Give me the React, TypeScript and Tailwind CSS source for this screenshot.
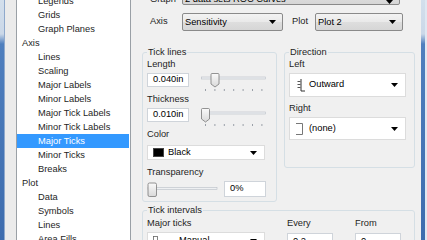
import React from "react";

const treeItems: { label: string; parent?: boolean; selected?: boolean }[] = [
  { label: "Legends" },
  { label: "Grids" },
  { label: "Graph Planes" },
  { label: "Axis", parent: true },
  { label: "Lines" },
  { label: "Scaling" },
  { label: "Major Labels" },
  { label: "Minor Labels" },
  { label: "Major Tick Labels" },
  { label: "Minor Tick Labels" },
  { label: "Major Ticks", selected: true },
  { label: "Minor Ticks" },
  { label: "Breaks" },
  { label: "Plot", parent: true },
  { label: "Data" },
  { label: "Symbols" },
  { label: "Lines" },
  { label: "Area Fills" },
];

const Arrow = () => (
  <svg width="7" height="4" viewBox="0 0 7 4" className="shrink-0">
    <path d="M0 0h7L3.5 4z" fill="#000" />
  </svg>
);

const GrayCombo = ({ text, width, align = "items-center" }: { text: string; width: string; align?: string }) => (
  <div
    className={`${width} h-[18px] flex ${align} justify-between pl-[2px] pr-[6px] rounded-[2px] border border-[#8a8a8a] bg-[linear-gradient(to_bottom,#f3f3f3,#e9e9e9_50%,#dedede_50%,#d6d6d6)] text-black`}
  >
    <span className="leading-[10px]">{text}</span>
    <Arrow />
  </div>
);

const WhiteCombo = ({
  width,
  height,
  icon,
  text,
}: {
  width: string;
  height: string;
  icon: React.ReactNode;
  text: string;
}) => (
  <div
    className={`${width} ${height} flex items-center bg-white border border-[#dcdcdc] pl-[5px] pr-[7px] text-black`}
  >
    {icon}
    <span className="ml-[4px] flex-1">{text}</span>
    <Arrow />
  </div>
);

const Thumb = ({ x }: { x: number }) => (
  <path
    d={`M${x + 1} 0.5h6a1 1 0 0 1 1 1v9.5l-4 3l-4 -3v-9.5a1 1 0 0 1 1 -1z`}
    fill="url(#thumbFill)"
    stroke="#7a7a7a"
    strokeWidth="0.8"
  />
);

const TickSlider = ({ thumb }: { thumb: number }) => (
  <svg width="66" height="20" viewBox="0 0 66 20" className="shrink-0">
    <defs>
      <linearGradient id="thumbFill" x1="0" y1="0" x2="0" y2="1">
        <stop offset="0" stopColor="#fafafa" />
        <stop offset="1" stopColor="#d9d9d9" />
      </linearGradient>
    </defs>
    <rect x="0.5" y="4" width="64" height="2" fill="#eef0f2" stroke="#b8bec6" strokeWidth="0.6" />
    {Array.from({ length: 7 }).map((_, i) => (
      <rect key={i} x={4 + i * 9.4} y="16" width="1" height="2" fill="#9aa0a8" />
    ))}
    <Thumb x={thumb} />
  </svg>
);

const TextBox = ({ value, width, height = "h-[14px]" }: { value: string; width: string; height?: string }) => (
  <div className={`${width} ${height} bg-white border border-[#cfd4da] flex items-center pl-[5px] text-black`}>
    {value}
  </div>
);

const Group = ({
  title,
  className,
  children,
}: {
  title: string;
  className: string;
  children: React.ReactNode;
}) => (
  <fieldset className={`border border-[#d5dfe5] rounded-[3px] px-[4px] ${className}`}>
    <legend className="px-[1px] leading-[12px] text-[#1e1e1e]">{title}</legend>
    {children}
  </fieldset>
);

const Label = ({ children, className = "" }: { children: React.ReactNode; className?: string }) => (
  <div className={`h-[12px] leading-[12px] text-[#1e1e1e] ${className}`}>{children}</div>
);

export default function App() {
  return (
    <div className="w-[427px] h-[240px] overflow-hidden flex bg-[#f0f0f0] font-['Liberation_Sans',Arial,sans-serif] text-[9.3px]">
      {/* left frame */}
      <div className="w-[5px] shrink-0 bg-[linear-gradient(to_bottom,#d3dfec_0px,#cbd8e8_34px,#4f7fbe_44px,#3d6cae_100%)] border-r border-[#8fa9cc]" />
      <div className="w-[11px] shrink-0 bg-[#ebebeb]" />

      {/* tree list */}
      <div className="w-[115px] shrink-0 bg-white border-l border-r border-[#9aa0a6] overflow-hidden">
        <div className="-mt-[6px]">
          {treeItems.map((item, i) => (
            <div
              key={i}
              className={`h-[14px] leading-[14px] whitespace-nowrap ${
                item.parent ? "pl-[5px]" : "pl-[21px]"
              } ${item.selected ? "bg-[#3399ff] text-white mr-[1px]" : "text-[#1e1e1e]"}`}
            >
              {item.label}
            </div>
          ))}
        </div>
      </div>

      {/* settings panel */}
      <div className="w-[290px] shrink-0 flex flex-col pl-[11px] pr-[6px]">
        <div className="-mt-[13px] h-[18px] flex items-end pl-[8px] shrink-0">
          <span className="w-[32px] leading-[10px] pb-[1px] text-[#1e1e1e]">Graph</span>
          <GrayCombo text="2 data sets ROC Curves" width="w-[218px]" align="items-end" />
        </div>
        <div className="mt-[8px] h-[18px] flex items-center pl-[8px] shrink-0">
          <span className="w-[32px] text-[#1e1e1e]">Axis</span>
          <GrayCombo text="Sensitivity" width="w-[101px]" />
          <span className="ml-[9px] w-[23px] text-[#1e1e1e]">Plot</span>
          <GrayCombo text="Plot 2" width="w-[88px]" />
        </div>

        <div className="mt-[15px] flex items-start gap-[7px] shrink-0">
          <Group title="Tick lines" className="w-[135px] pb-[4px]">
            <Label>Length</Label>
            <div className="mt-[3px] h-[20px] flex items-start">
              <TextBox value="0.040in" width="w-[42px]" />
              <div className="ml-[12px]">
                <TickSlider thumb={10} />
              </div>
            </div>
            <Label>Thickness</Label>
            <div className="mt-[3px] h-[20px] flex items-start">
              <TextBox value="0.010in" width="w-[42px]" />
              <div className="ml-[12px]">
                <TickSlider thumb={0.5} />
              </div>
            </div>
            <Label>Color</Label>
            <WhiteCombo
              width="w-[118px] mt-[5px]"
              height="h-[15px]"
              icon={<span className="w-[11px] h-[9px] bg-black border border-[#444] shrink-0" />}
              text="Black"
            />
            <Label className="mt-[6px]">Transparency</Label>
            <div className="mt-[3px] h-[16px] flex items-start">
              <svg width="71" height="16" viewBox="0 0 71 16" className="shrink-0">
                <defs>
                  <linearGradient id="thumbFill2" x1="0" y1="0" x2="0" y2="1">
                    <stop offset="0" stopColor="#fafafa" />
                    <stop offset="1" stopColor="#d9d9d9" />
                  </linearGradient>
                </defs>
                <rect x="1" y="6.5" width="69" height="2" fill="#eef0f2" stroke="#b8bec6" strokeWidth="0.6" />
                <rect x="1" y="2" width="8.5" height="13.5" rx="1.5" fill="url(#thumbFill2)" stroke="#7a7a7a" strokeWidth="0.8" />
              </svg>
              <div className="ml-[6px]">
                <TextBox value="0%" width="w-[42px]" height="h-[16px]" />
              </div>
            </div>
          </Group>

          <Group title="Direction" className="w-[131px] pb-[27px]">
            <Label>Left</Label>
            <WhiteCombo
              width="w-[117px] mt-[3px]"
              height="h-[24px]"
              icon={
                <svg width="10" height="14" viewBox="0 0 10 14" className="shrink-0">
                  <path d="M6 1v12h4" fill="none" stroke="#333" strokeWidth="1" />
                  <path d="M2.5 3.5h3M2.5 6.5h3M2.5 9.5h3" stroke="#555" strokeWidth="1" />
                </svg>
              }
              text="Outward"
            />
            <Label className="mt-[5px]">Right</Label>
            <WhiteCombo
              width="w-[117px] mt-[3px]"
              height="h-[23px]"
              icon={
                <svg width="10" height="14" viewBox="0 0 10 14" className="shrink-0">
                  <path d="M1 1.5h6.5v11H1" fill="none" stroke="#777" strokeWidth="1" />
                </svg>
              }
              text="(none)"
            />
          </Group>
        </div>

        <Group title="Tick intervals" className="mt-[2px] w-[273px] shrink-0">
          <div className="mt-[1px] flex h-[12px] leading-[12px] text-[#1e1e1e]">
            <span className="w-[140px]">Major ticks</span>
            <span className="w-[68px]">Every</span>
            <span>From</span>
          </div>
          <div className="mt-[3px] flex items-start">
            <WhiteCombo
              width="w-[118px]"
              height="h-[18px]"
              icon={
                <svg width="22" height="10" viewBox="0 0 22 10" className="shrink-0">
                  <rect x="0.5" y="0.5" width="4" height="4" fill="#fff" stroke="#666" strokeWidth="0.8" />
                  <path d="M2.5 4.5v4h3" fill="none" stroke="#666" strokeWidth="0.8" />
                  <path d="M7 5h5v2H9v2H7z" fill="#111" />
                  <path d="M12 4h7v2h-2.5v4h-2V6H12z" fill="#1f4fa8" />
                </svg>
              }
              text="Manual"
            />
            <div className="ml-[22px] mt-[1px]">
              <TextBox value="0.2" width="w-[46px]" height="h-[18px]" />
            </div>
            <div className="ml-[22px] mt-[1px]">
              <TextBox value="0" width="w-[46px]" height="h-[18px]" />
            </div>
          </div>
        </Group>
      </div>

      {/* right frame */}
      <div className="w-[4px] shrink-0 bg-[linear-gradient(to_bottom,#d3dfec_0px,#cbd8e8_34px,#4f7fbe_44px,#3d6cae_100%)]" />
      <div className="w-[2px] shrink-0 bg-[#dfe7f1]" />
    </div>
  );
}
